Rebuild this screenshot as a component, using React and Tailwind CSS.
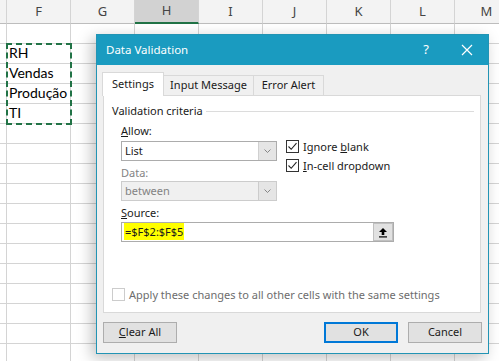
import React from "react";

const cols = ["", "F", "G", "H", "I", "J", "K", "L", "M"];
const cellText = { 1: "RH", 2: "Vendas", 3: "Produção", 4: "TI" };

const ui = { fontFamily: '"Segoe UI", "Noto Sans", sans-serif' };

const Chevron = () => (
  <svg width="9" height="6" viewBox="0 0 9 6" fill="none">
    <polyline points="1.5,1.5 4.5,4.5 7.5,1.5" stroke="#7a7a7a" strokeWidth="0.9" />
  </svg>
);

const Check = ({ checked, disabled }) => (
  <span
    className={`flex h-[13px] w-[13px] shrink-0 items-center justify-center border bg-white ${
      disabled ? "border-[#cccccc]" : "border-[#333333]"
    }`}
  >
    {checked && (
      <svg width="11" height="11" viewBox="0 0 11 11" fill="none">
        <polyline points="1.5,5.5 4.2,8.3 9.5,2.2" stroke="#222" strokeWidth="1.1" />
      </svg>
    )}
  </span>
);

const Select = ({ value, disabled }) => (
  <div
    className={`flex h-[20px] w-[156px] items-center border ${
      disabled ? "border-[#cccccc] bg-[#f0f0f0] text-[#838383]" : "border-[#acacac] bg-white text-[#1a1a1a]"
    }`}
  >
    <span className="flex-1 pl-[3px]">{value}</span>
    <span
      className={`flex h-full w-[18px] items-center justify-center border-l ${
        disabled ? "border-[#cccccc] bg-[#e5e5e5]" : "border-[#d0d0d0] bg-[#e5e5e5]"
      }`}
    >
      <Chevron />
    </span>
  </div>
);

const Button = ({ children, primary }) => (
  <button
    className={`flex h-[21px] w-[74px] items-center justify-center bg-[#e1e1e1] text-[11px] text-[#1a1a1a] ${
      primary ? "border-2 border-[#0078d7]" : "border border-[#adadad]"
    }`}
  >
    {children}
  </button>
);

export default function App() {
  return (
    <div className="relative h-[361px] w-[499px] overflow-hidden bg-white">
      {/* sheet */}
      <div
        className="grid grid-cols-[7px_repeat(8,64px)_1fr] text-[#444444]"
        style={ui}
      >
        {cols.map((c, i) => (
          <div
            key={"h" + i}
            className={`flex h-[24px] items-center justify-center border-r border-[#d4d4d4] text-[13px] ${
              c === "H"
                ? "border-b-2 border-b-[#217346] bg-[#d2d2d2]"
                : "border-b border-b-[#bdbdbd] bg-[#f3f3f3]"
            }`}
          >
            {c}
          </div>
        ))}
        <div className="border-b border-b-[#bdbdbd] bg-[#f3f3f3]" />
        {Array.from({ length: 17 }).map((_, r) =>
          [...cols, "x"].map((c, i) => (
            <div
              key={r + "-" + i}
              className="flex h-[20px] items-end border-b border-r border-[#d4d4d4] pb-[1px] pl-[2px] text-[14px] leading-[18px] text-black"
              style={{ fontFamily: 'Lato, "Noto Sans", sans-serif' }}
            >
              {c === "F" ? cellText[r] : ""}
            </div>
          ))
        )}
      </div>

      {/* copy marquee */}
      <div className="absolute left-[6px] top-[43px] h-[82px] w-[66px] border-2 border-dashed border-[#217346]" />

      {/* dialog */}
      <div
        className="absolute left-[96px] top-[34px] flex h-[320px] w-[393px] flex-col border border-[#2294b4] bg-[#f0f0f0] text-[11px] text-[#1a1a1a] shadow-[-4px_4px_14px_rgba(0,0,0,0.25)]"
        style={ui}
      >
        <div className="flex h-[30px] shrink-0 items-center bg-[#1a9bc0] pl-[9px] text-white">
          <span className="flex-1 text-[11.5px]">Data Validation</span>
          <span className="w-[20px] text-center text-[13px]">?</span>
          <span className="ml-[24px] mr-[14px] flex w-[14px] justify-center">
            <svg width="12" height="12" viewBox="0 0 12 12">
              <path d="M1 1 L11 11 M11 1 L1 11" stroke="white" strokeWidth="1.2" />
            </svg>
          </span>
        </div>

        <div className="flex flex-1 flex-col px-[6px] pt-[6px]">
          {/* tabs */}
          <div className="relative z-10 -ml-px flex h-[24px] items-end">
            <div className="-mb-px flex h-[24px] w-[62px] items-center justify-center border border-b-0 border-[#d9d9d9] bg-white">
              Settings
            </div>
            <div className="flex h-[20px] w-[90px] items-center justify-center border border-b-0 border-l-0 border-[#d9d9d9]">
              Input Message
            </div>
            <div className="flex h-[20px] w-[70px] items-center justify-center border border-b-0 border-l-0 border-[#d9d9d9]">
              Error Alert
            </div>
          </div>

          {/* panel */}
          <div className="flex h-[218px] w-[378px] flex-col border border-[#d9d9d9] bg-white pl-[8px] pr-[6px] pt-[7px]">
            <div className="flex h-[16px] items-center">
              <span>Validation criteria</span>
              <span className="ml-[3px] h-px flex-1 bg-[#dcdcdc]" />
            </div>
            <div className="ml-[9px] flex">
              <div className="flex w-[156px] flex-col">
                <div className="mt-[4px] h-[16px] leading-[16px]">
                  <span className="underline">A</span>llow:
                </div>
                <div className="mt-[2px]">
                  <Select value="List" />
                </div>
                <div className="mt-[4px] h-[16px] leading-[16px] text-[#838383]">Data:</div>
                <Select value="between" disabled />
              </div>
              <div className="ml-[9px] mt-[21px] flex flex-col gap-[6px]">
                <div className="flex h-[13px] items-center gap-[4px] leading-[13px]">
                  <Check checked />
                  <span>
                    Ignore <span className="underline">b</span>lank
                  </span>
                </div>
                <div className="flex h-[13px] items-center gap-[4px] leading-[13px]">
                  <Check checked />
                  <span>
                    <span className="underline">I</span>n-cell dropdown
                  </span>
                </div>
              </div>
            </div>
            <div className="ml-[9px] mt-[4px] h-[16px] leading-[16px]">
              <span className="underline">S</span>ource:
            </div>
            <div className="ml-[9px] mt-[1px] flex h-[20px] w-[273px] items-center border border-[#acacac]">
              <span className="flex-1 pl-[2px]">
                <span className="bg-[#ffff00] px-px py-[1px]">=$F$2:$F$5</span>
              </span>
              <span className="flex h-[18px] w-[20px] items-center justify-center border border-[#c0c0c0] bg-[#e1e1e1]">
                <svg width="10" height="11" viewBox="0 0 10 11">
                  <path d="M5 1 L9 5 L6.3 5 L6.3 8 L3.7 8 L3.7 5 L1 5 Z" fill="black" />
                  <rect x="1" y="9.3" width="8" height="1.2" fill="black" />
                </svg>
              </span>
            </div>
            <div className="mt-auto mb-[9px] flex items-center gap-[4px] text-[#6d6d6d]">
              <Check disabled />
              <span>Apply these changes to all other cells with the same settings</span>
            </div>
          </div>

          {/* buttons */}
          <div className="mt-[9px] flex">
            <Button>
              <span>
                <span className="underline">C</span>lear All
              </span>
            </Button>
            <div className="flex-1" />
            <Button primary>OK</Button>
            <div className="w-[10px]" />
            <Button>Cancel</Button>
          </div>
        </div>
      </div>
    </div>
  );
}
